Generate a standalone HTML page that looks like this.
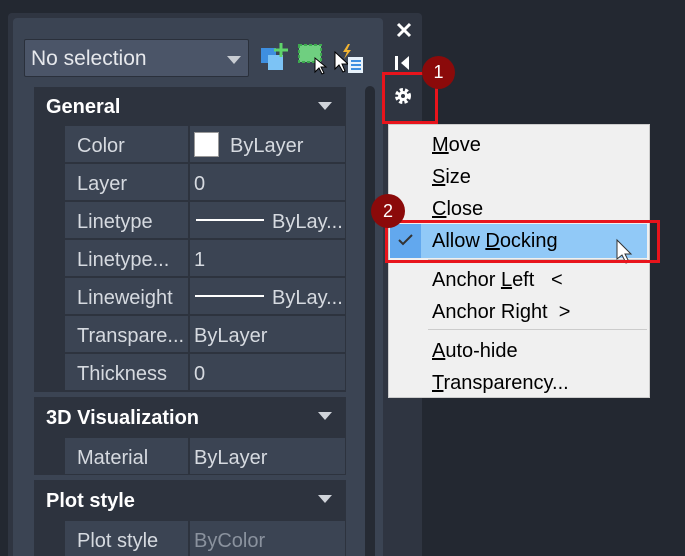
<!DOCTYPE html><html><head><style>
*{margin:0;padding:0;box-sizing:border-box}
html,body{width:685px;height:556px;overflow:hidden}
body{background:#232831;position:relative;font-family:"Liberation Sans",sans-serif}
.a{position:absolute}
.cell{position:absolute;background:#3b4453;color:#d6dae0;font-size:20px;line-height:40px;padding-left:12px;white-space:nowrap;overflow:hidden}
.hdr{position:absolute;left:34px;width:312px;background:#2d333e;color:#fff;font-weight:bold;font-size:20px;padding-left:12px}
.tri{position:absolute;right:14px;width:0;height:0;border-left:7px solid transparent;border-right:7px solid transparent;border-top:8px solid #d0d4da}
.mi{position:absolute;left:432px;font-size:20px;color:#000}
.mi u{text-decoration:underline}
</style></head><body>
<div class="a" style="left:8px;top:13px;width:414px;height:543px;background:#2f3541;border-radius:4px 4px 0 0"></div>
<div class="a" style="left:13px;top:18px;width:370px;height:538px;background:#3b4453;border-radius:4px 4px 0 0"></div>
<div class="a" style="left:24px;top:39px;width:225px;height:38px;background:#4b5568;border:1px solid #2a303b;border-radius:2px;color:#e6e8ec;font-size:21px;line-height:38px;padding-left:6px">No selection</div>
<div class="a" style="left:227px;top:56px;border-left:7px solid transparent;border-right:7px solid transparent;border-top:8px solid #c8ccd2"></div>
<svg class="a" style="left:260px;top:42px" width="110" height="34">
<rect x="1" y="6" width="15" height="15" fill="#3e8fe0"/><rect x="8" y="13" width="15" height="15" fill="#7cc3f5"/><path d="M21 1v14M14 8h14" stroke="#5fd46a" stroke-width="3"/>
<rect x="39" y="3" width="22" height="17" fill="#6fcf80" stroke="#3daa4f" stroke-dasharray="3 2" stroke-width="2"/><path d="M55 16l0 14l4-4l3 6l2-1l-3-6l5 0z" fill="#fff" stroke="#000" stroke-width="1"/>
<path d="M75 10l0 17l4-4l4 7l2-1l-3-7l6 0z" fill="#fff" stroke="#000" stroke-width="1"/><path d="M88 2l-5 8h4l-3 7l7-9h-4l3-6z" fill="#f2b431"/><rect x="88" y="15" width="15" height="16" fill="#e8f2fb"/><path d="M91 19h10M91 23h10M91 27h10" stroke="#3e8fe0" stroke-width="2"/>
</svg>
<div class="a" style="left:365px;top:86px;width:10px;height:470px;background:#262b34;border-radius:5px 5px 0 0"></div>
<div class="hdr" style="top:87px;height:38px;line-height:40px">General<div class="tri" style="top:15px"></div></div>
<div class="a" style="left:34px;top:125px;width:312px;height:267px;background:#2d333e"></div>
<div class="cell" style="left:65px;top:126px;width:123px;height:36px">Color</div><div class="cell" style="left:190px;top:126px;width:155px;height:36px;padding-left:40px">ByLayer</div>
<div class="a" style="left:194px;top:132px;width:25px;height:25px;background:#fff;border:1px solid #999"></div>
<div class="cell" style="left:65px;top:164px;width:123px;height:36px">Layer</div><div class="cell" style="left:190px;top:164px;width:155px;height:36px;padding-left:4px">0</div>
<div class="cell" style="left:65px;top:202px;width:123px;height:36px">Linetype</div><div class="cell" style="left:190px;top:202px;width:155px;height:36px;padding-left:82px">ByLay...</div>
<div class="a" style="left:196px;top:219px;width:68px;height:2px;background:#fff"></div>
<div class="cell" style="left:65px;top:240px;width:123px;height:36px">Linetype...</div><div class="cell" style="left:190px;top:240px;width:155px;height:36px;padding-left:4px">1</div>
<div class="cell" style="left:65px;top:278px;width:123px;height:36px">Lineweight</div><div class="cell" style="left:190px;top:278px;width:155px;height:36px;padding-left:82px">ByLay...</div>
<div class="a" style="left:195px;top:295px;width:69px;height:2px;background:#fff"></div>
<div class="cell" style="left:65px;top:316px;width:123px;height:36px">Transpare...</div><div class="cell" style="left:190px;top:316px;width:155px;height:36px;padding-left:4px">ByLayer</div>
<div class="cell" style="left:65px;top:354px;width:123px;height:36px">Thickness</div><div class="cell" style="left:190px;top:354px;width:155px;height:36px;padding-left:4px">0</div>
<div class="hdr" style="top:397px;height:40px;line-height:42px">3D Visualization<div class="tri" style="top:15px"></div></div>
<div class="a" style="left:34px;top:437px;width:312px;height:38px;background:#2d333e"></div>
<div class="cell" style="left:65px;top:438px;width:123px;height:36px">Material</div><div class="cell" style="left:190px;top:438px;width:155px;height:36px;padding-left:4px">ByLayer</div>
<div class="hdr" style="top:480px;height:40px;line-height:42px">Plot style<div class="tri" style="top:15px"></div></div>
<div class="a" style="left:34px;top:520px;width:312px;height:36px;background:#2d333e"></div>
<div class="cell" style="left:65px;top:521px;width:123px;height:35px">Plot style</div><div class="cell" style="left:190px;top:521px;width:155px;height:35px;padding-left:4px;color:#8a929e">ByColor</div>
<svg class="a" style="left:390px;top:20px" width="30" height="90">
<path d="M8 4l12 12M20 4L8 16" stroke="#fff" stroke-width="3"/>
<rect x="5" y="36" width="3" height="14" fill="#fff"/><path d="M19 36v14l-8-7z" fill="#fff"/>
<circle cx="13" cy="76" r="6" fill="none" stroke="#fff" stroke-width="4" stroke-dasharray="3 2"/><circle cx="13" cy="76" r="5" fill="#fff"/><circle cx="13" cy="76" r="2" fill="#2f3541"/>
</svg>
<div class="a" style="left:388px;top:124px;width:262px;height:274px;background:#f0f0f0;border:1px solid #ccc"></div>
<div class="a" style="left:390px;top:224px;width:257px;height:34px;background:#91c9f7"></div>
<div class="a" style="left:390px;top:224px;width:31px;height:34px;background:#62a8ee"></div>
<svg class="a" style="left:396px;top:232px" width="20" height="16"><path d="M3 8l4 4l9-9" stroke="#333" stroke-width="2" fill="none"/></svg>
<div class="a" style="left:428px;top:259px;width:219px;height:1px;background:#ccc"></div>
<div class="a" style="left:428px;top:329px;width:219px;height:1px;background:#ccc"></div>
<div class="mi" style="top:134px"><u>M</u>ove</div>
<div class="mi" style="top:166px"><u>S</u>ize</div>
<div class="mi" style="top:198px"><u>C</u>lose</div>
<div class="mi" style="top:230px">Allow <u>D</u>ocking</div>
<div class="mi" style="top:269px">Anchor <u>L</u>eft &nbsp;&nbsp;&lt;</div>
<div class="mi" style="top:301px">Anchor Ri<u>g</u>ht &nbsp;&gt;</div>
<div class="mi" style="top:340px"><u>A</u>uto-hide</div>
<div class="mi" style="top:372px"><u>T</u>ransparency...</div>
<svg class="a" style="left:615px;top:238px" width="22" height="30"><path d="M2 2v19l5-4l4 8l3-1l-4-8h6z" fill="#fff" stroke="#333" stroke-width="1"/></svg>
<div class="a" style="left:382px;top:72px;width:56px;height:52px;border:3px solid #e8141c"></div>
<div class="a" style="left:385px;top:220px;width:275px;height:43px;border:3px solid #e8141c"></div>
<div class="a" style="left:422px;top:56px;width:33px;height:33px;border-radius:50%;background:#8b0a0a;color:#fff;font-size:18px;text-align:center;line-height:33px">1</div>
<div class="a" style="left:371px;top:194px;width:34px;height:34px;border-radius:50%;background:#8b0a0a;color:#fff;font-size:18px;text-align:center;line-height:34px">2</div>
</body></html>
